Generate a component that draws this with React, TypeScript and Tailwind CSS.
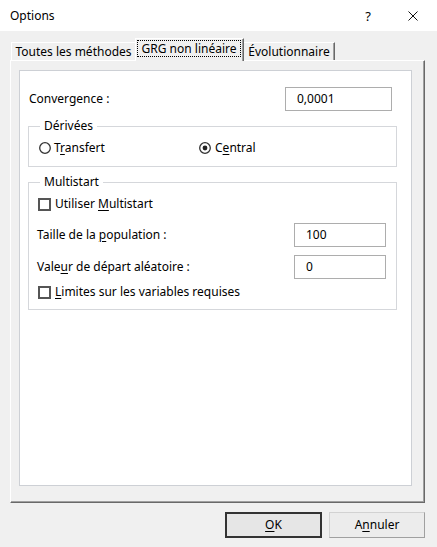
import type { ReactNode } from "react";

// Access-key letter, underlined like a Win32 mnemonic
function Key({ children }: { children: ReactNode }) {
  return <span className="underline decoration-1 underline-offset-[2px]">{children}</span>;
}

function Radio({ checked }: { checked?: boolean }) {
  return (
    <svg width="12" height="12" viewBox="0 0 12 12" className="shrink-0">
      <circle cx="6" cy="6" r="5.3" fill="#fff" stroke="#333" strokeWidth="1.3" />
      {checked && <circle cx="6" cy="6" r="2.4" fill="#222" />}
    </svg>
  );
}

function Checkbox() {
  return <div className="w-[13px] h-[13px] shrink-0 border-2 border-[#555] bg-white" />;
}

function TextBox({ value, width }: { value: string; width: string }) {
  return (
    <div className={`${width} h-[24px] border border-[#adadad] bg-white flex items-center pl-[11px]`}>
      {value}
    </div>
  );
}

function GroupBox({ title, className, children }: { title: string; className: string; children: ReactNode }) {
  return (
    <div className={`relative mx-[8px] w-[369px] border border-[#d5d7db] ${className}`}>
      <span className="absolute left-[11px] -top-[9px] bg-white px-[4px] leading-[16px]">{title}</span>
      {children}
    </div>
  );
}

export default function App() {
  return (
    <div className="w-[437px] h-[547px] bg-[#f0f0f0] flex flex-col overflow-hidden text-[12px] leading-[16px] text-black font-['Segoe_UI','Noto_Sans',sans-serif]">
      {/* title bar */}
      <div className="h-[31px] bg-white flex items-center pl-[10px] pr-[19px]">
        <span>Options</span>
        <span className="ml-auto w-[10px] text-center text-[13px]">?</span>
        <svg width="10" height="10" viewBox="0 0 10 10" className="ml-[35px]">
          <path d="M0.5 0.5 L9.5 9.5 M9.5 0.5 L0.5 9.5" stroke="#111" strokeWidth="1" />
        </svg>
      </div>

      {/* tabs */}
      <div className="relative z-10 mt-[7px] ml-[11px] h-[22px] flex items-end">
        <div className="w-[124px] h-[18px] border-t border-l border-white flex items-center justify-center">
          Toutes les méthodes
        </div>
        <div className="w-[109px] h-[23px] -mb-px bg-[#f0f0f0] border-t border-l border-t-white border-l-white border-r border-r-[#696969] shadow-[inset_-1px_0_0_#a0a0a0] pl-[1px] pr-[2px] pt-[1px]">
          <div className="h-[17px] border border-dotted border-black flex items-center justify-center">
            GRG non linéaire
          </div>
        </div>
        <div className="w-[91px] h-[18px] border-t border-t-white border-r border-r-[#696969] shadow-[inset_-1px_0_0_#a0a0a0] flex items-center justify-center">
          Évolutionnaire
        </div>
      </div>

      {/* tab page */}
      <div className="ml-[10px] w-[415px] h-[443px] border border-t-white border-l-white border-r-[#696969] border-b-[#696969] shadow-[inset_-1px_-1px_0_#a0a0a0] pl-[8px] pt-[9px]">
        <div className="w-[393px] h-[416px] bg-white border border-[#cdd0d5] flex flex-col">
          <div className="mt-[16px] flex items-center justify-between pl-[9px] pr-[19px]">
            <span>Convergence :</span>
            <TextBox value="0,0001" width="w-[107px]" />
          </div>

          <GroupBox title="Dérivées" className="mt-[15px] h-[41px] pl-[10px] pt-[13px]">
            <div className="h-[16px] flex items-center">
              <div className="w-[160px] flex items-center gap-[3px]">
                <Radio />
                <span>
                  T<Key>r</Key>ansfert
                </span>
              </div>
              <div className="flex items-center gap-[4px]">
                <Radio checked />
                <span>
                  C<Key>e</Key>ntral
                </span>
              </div>
            </div>
          </GroupBox>

          <GroupBox title="Multistart" className="mt-[15px] h-[128px] pl-[8px] pr-[10px] pt-[13px] flex flex-col">
            <div className="h-[16px] pl-[1px] flex items-center gap-[4px]">
              <Checkbox />
              <span>
                Utiliser <Key>M</Key>ultistart
              </span>
            </div>
            <div className="mt-[11px] flex items-center justify-between">
              <span>
                Taille de la <Key>p</Key>opulation :
              </span>
              <TextBox value="100" width="w-[92px]" />
            </div>
            <div className="mt-[8px] flex items-center justify-between">
              <span>
                Vale<Key>u</Key>r de départ aléatoire :
              </span>
              <TextBox value="0" width="w-[92px]" />
            </div>
            <div className="mt-[5px] h-[16px] pl-[1px] flex items-center gap-[4px]">
              <Checkbox />
              <span>
                <Key>L</Key>imites sur les variables requises
              </span>
            </div>
          </GroupBox>
        </div>
      </div>

      {/* dialog buttons */}
      <div className="mt-[9px] flex justify-end gap-[7px] pr-[12px]">
        <button className="w-[97px] h-[26px] border-2 border-[#333] bg-[#e6e6e6] flex items-center justify-center">
          <Key>O</Key>K
        </button>
        <button className="w-[96px] h-[26px] border border-t-[#d2d2d2] border-l-[#d2d2d2] border-r-[#a0a0a0] border-b-[#a0a0a0] bg-[#ececec] flex items-center justify-center">
          A<Key>n</Key>nuler
        </button>
      </div>
    </div>
  );
}
